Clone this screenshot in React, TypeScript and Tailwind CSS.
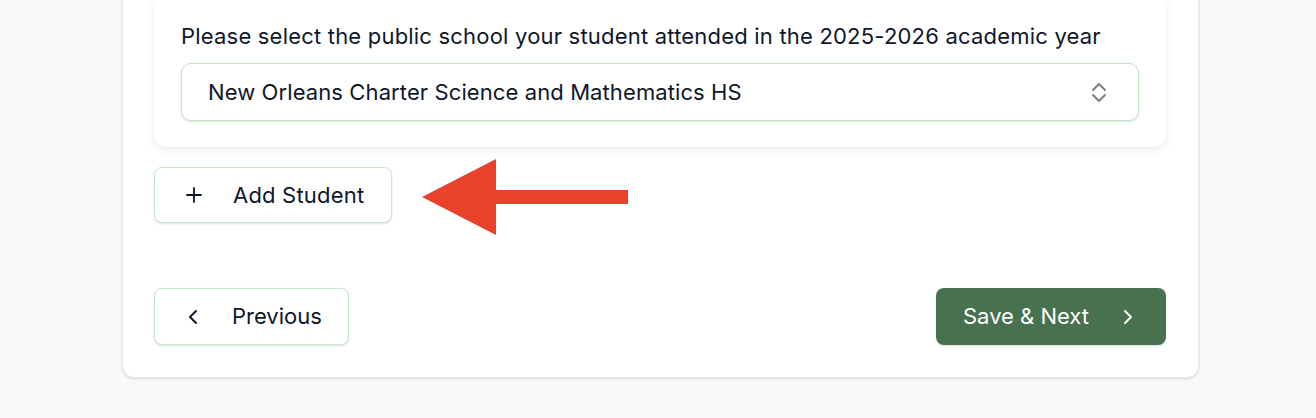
import { ChevronLeft, ChevronRight, Plus } from 'lucide-react';

function ArrowMark() {
  return (
    <svg width="206" height="76" viewBox="0 0 206 76" className="-mb-[12px] -mt-[8px]" aria-hidden="true">
      <polygon points="0,38 74,0 74,76" fill="#e9412a" />
      <rect x="73" y="31" width="133" height="14" fill="#e9412a" />
    </svg>
  );
}

function UpDown() {
  return (
    <svg width="16" height="21" viewBox="0 0 16 21" fill="none" stroke="#7b7f88" strokeWidth="2" strokeLinecap="round" strokeLinejoin="round">
      <polyline points="2,8 8,2 14,8" />
      <polyline points="2,13 8,19 14,13" />
    </svg>
  );
}

export default function App() {
  return (
    <main
      className="h-[418px] overflow-hidden bg-[#f8f9fb] text-[#0f172a]"
      style={{ fontFamily: 'Inter, "Noto Sans", sans-serif' }}
    >
      <div className="-mt-[37px] ml-[122px] w-[1077px] rounded-xl border border-[#e5e7eb] bg-white pb-8 pl-[31px] pr-[32px] pt-8 shadow-sm">
        <div className="rounded-xl bg-white px-[27px] pb-[26px] pt-[26px] shadow-[0_2px_8px_rgba(0,0,0,0.09)]">
          <label className="mb-[13px] block text-[22px] leading-7 tracking-[0.2px]">
            Please select the public school your student attended in the 2025-2026 academic year
          </label>
          <div className="flex h-[58px] items-center justify-between rounded-[10px] border border-[#bfe6c5] bg-white pl-[26px] pr-[31px] shadow-sm">
            <span className="text-[22px] tracking-[0.1px]">New Orleans Charter Science and Mathematics HS</span>
            <UpDown />
          </div>
        </div>

        <div className="mt-5 flex items-center gap-[30px]">
          <button className="flex h-[56px] items-center gap-[27px] rounded-lg border border-[#c4e8c9] bg-white px-[27px] text-[22px] tracking-[0.2px] shadow-sm">
            <Plus size={24} strokeWidth={1.8} />
            Add Student
          </button>
          <ArrowMark />
        </div>

        <div className="mt-[65px] flex items-center justify-between">
          <button className="flex h-[57px] items-center gap-[27px] rounded-lg border border-[#c4e8c9] bg-white px-[26px] text-[22px] shadow-sm">
            <ChevronLeft size={24} strokeWidth={2} />
            Previous
          </button>
          <button className="flex h-[57px] items-center gap-[27px] rounded-lg bg-[#47714f] pl-[27px] pr-[26px] text-[22px] text-white shadow-sm">
            Save &amp; Next
            <ChevronRight size={24} strokeWidth={2} />
          </button>
        </div>
      </div>
    </main>
  );
}
